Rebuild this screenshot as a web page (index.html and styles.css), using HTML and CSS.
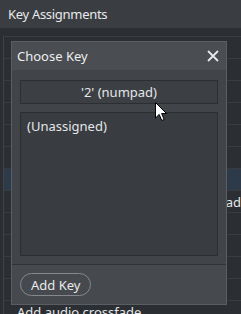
FILE: index.html
```html
<!DOCTYPE html>
<html>
<head>
<meta charset="utf-8">
<link rel="stylesheet" href="styles.css">
</head>
<body>
<div class="app">
  <div class="header">Key Assignments</div>
  <div class="panel">
    <div class="list">
      <div class="row"></div>
      <div class="row"></div>
      <div class="row"></div>
      <div class="row"></div>
      <div class="row"></div>
      <div class="row"></div>
      <div class="row sel"></div>
      <div class="row"><span class="rtext">Add audio crossfade</span></div>
      <div class="row"></div>
      <div class="row"></div>
      <div class="row"></div>
      <div class="row"></div>
      <div class="row"><span class="ltext">Add audio crossfade</span></div>
    </div>
  </div>
  <div class="dialog">
    <div class="dtitle">
      <span>Choose Key</span>
      <svg class="close" width="12" height="12" viewBox="0 0 12 12"><path d="M1 1L11 11M11 1L1 11" stroke="#e6e7e8" stroke-width="1.8" fill="none"/></svg>
    </div>
    <div class="dbody">
      <div class="keyfield">'2' (numpad)</div>
      <div class="keylist">(Unassigned)</div>
    </div>
    <div class="dfoot">
      <button class="btn">Add Key</button>
    </div>
  </div>
  <svg class="cursor" width="13" height="20" viewBox="0 0 13 20"><path d="M0.5 0.5L0.5 16L4.2 12.4L6.8 18.5L9.2 17.5L6.6 11.5L11.5 11.5Z" fill="#ffffff" stroke="#000000" stroke-width="1"/></svg>
</div>
</body>
</html>
```
FILE: styles.css
```css
html, body {
  margin: 0;
  padding: 0;
}
body {
  width: 241px;
  height: 314px;
  overflow: hidden;
  background: #2b2e32;
  font-family: "Noto Sans", "Open Sans", sans-serif;
  color: #e4e6e8;
}
.app {
  position: relative;
  width: 241px;
  height: 314px;
  overflow: hidden;
}
.header {
  height: 28px;
  background: #3a3d42;
  font-size: 13px;
  letter-spacing: -0.3px;
  line-height: 28px;
  padding-left: 8px;
  color: #e8e9ea;
}
.panel {
  padding: 8px 0 0 3px;
  background: #2b2e32;
}
.list {
  border-left: 1px solid #3f4247;
  border-top: 1px solid #3a3d42;
  height: 400px;
}
.row {
  height: 21px;
  border-bottom: 1px solid #383b40;
  position: relative;
  font-size: 13px;
  line-height: 21px;
}
.row.sel {
  background: #2d3a49;
}
.rtext {
  position: absolute;
  left: 120px;
  top: 1px;
  white-space: nowrap;
}
.ltext {
  position: absolute;
  left: 13px;
  top: 1px;
  white-space: nowrap;
}
.dialog {
  position: absolute;
  left: 11px;
  top: 41px;
  width: 214px;
  height: 262px;
  border: 1px solid #5a5d62;
  background: #414449;
  display: flex;
  flex-direction: column;
}
.dtitle {
  height: 28px;
  background: #4a4d52;
  display: flex;
  align-items: center;
  justify-content: space-between;
  padding: 0 7px 0 5px;
  font-size: 13px;
  color: #eceeef;
}
.close {
  display: block;
}
.dbody {
  flex: 1;
  padding: 10px 8px 8px 8px;
  display: flex;
  flex-direction: column;
  gap: 8px;
}
.keyfield {
  height: 22px;
  border: 1px solid #2c2e32;
  background: #3c3f44;
  font-size: 13px;
  line-height: 22px;
  text-align: center;
  color: #e4e6e8;
}
.keylist {
  flex: 1;
  border: 1px solid #2c2e32;
  background: #393c41;
  font-size: 13px;
  padding: 4px 6px;
  color: #e4e6e8;
}
.dfoot {
  height: 39px;
  border-top: 1px solid #2f3236;
  background: #46494e;
  display: flex;
  align-items: center;
  padding-left: 8px;
}
.btn {
  height: 23px;
  padding: 0 10px;
  border: 1px solid #85888c;
  border-radius: 12px;
  background: #46494e;
  color: #e8e9ea;
  font-family: "Noto Sans", "Open Sans", sans-serif;
  font-size: 13px;
  line-height: 20px;
}
.cursor {
  position: absolute;
  left: 155px;
  top: 102px;
}
```
